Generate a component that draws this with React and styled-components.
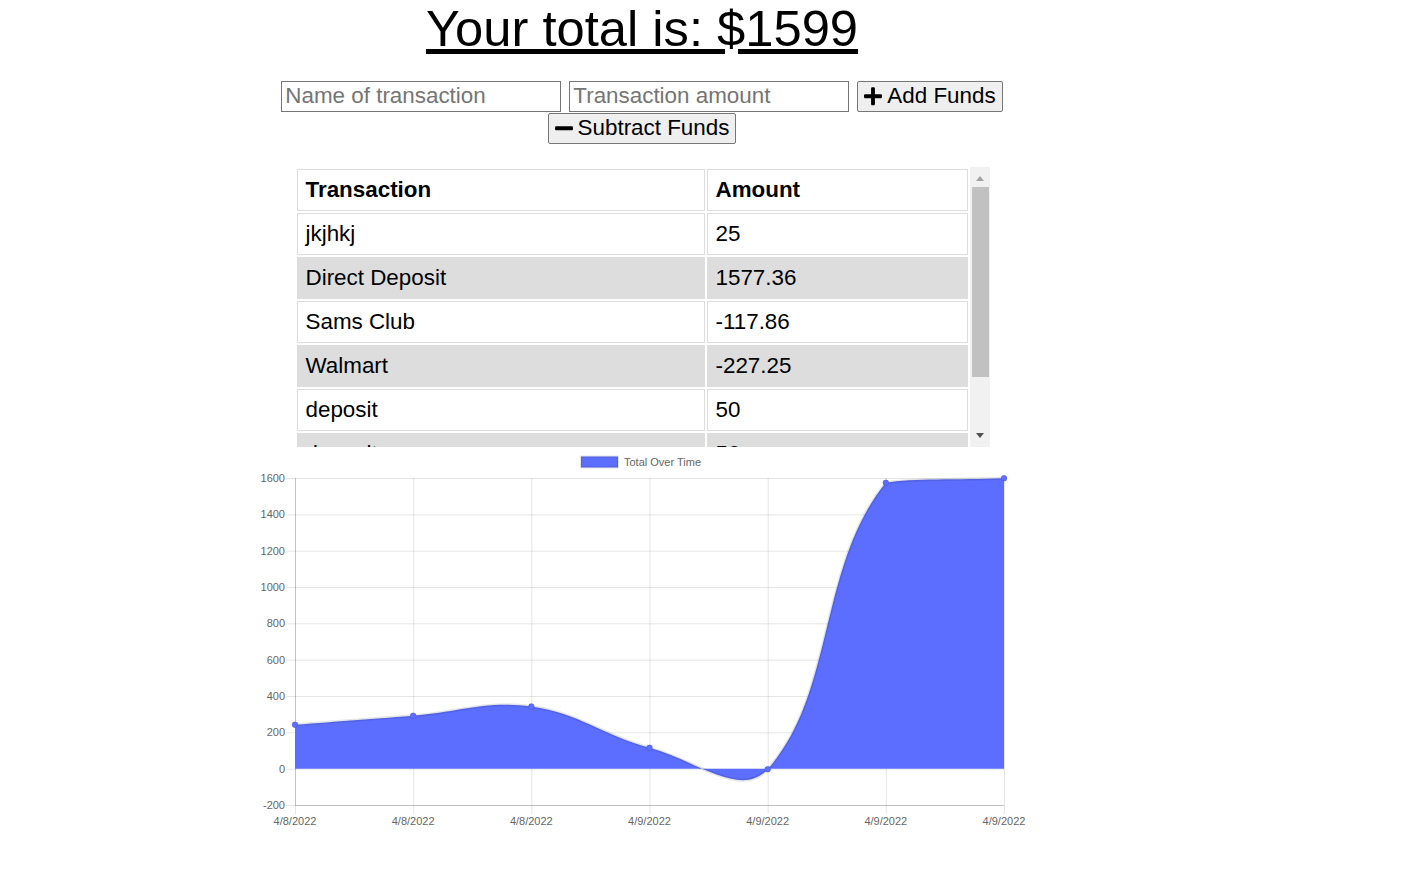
import React from 'react';
import styled, { createGlobalStyle } from 'styled-components';
import { FaPlus, FaMinus } from 'react-icons/fa';

const GlobalStyle = createGlobalStyle`
  body {
    margin: 0;
    background: #fff;
    font-family: 'Liberation Sans', Arial, sans-serif;
    color: #000;
  }
`;

const Page = styled.div`
  width: 1284px;
  display: flex;
  flex-direction: column;
  align-items: center;
`;

const Title = styled.h1`
  margin: 0;
  font-size: 50.7px;
  font-weight: 400;
  line-height: 57.5px;
  text-decoration: underline;
`;

const Form = styled.form`
  margin-top: 23px;
  width: 740px;
  display: flex;
  flex-wrap: wrap;
  justify-content: center;
  column-gap: 8px;
  row-gap: 1px;
`;

const TextInput = styled.input`
  width: 280px;
  height: 31px;
  box-sizing: border-box;
  padding: 0 3px;
  border: 1px solid #767676;
  font-family: 'Liberation Sans', Arial, sans-serif;
  font-size: 22.4px;
  color: #000;

  &::placeholder {
    color: #757575;
  }
`;

const FundsButton = styled.button`
  height: 31px;
  box-sizing: border-box;
  display: inline-flex;
  align-items: center;
  gap: 5px;
  padding: 0 6px;
  background: #efefef;
  border: 1px solid #767676;
  border-radius: 2px;
  font-family: 'Liberation Sans', Arial, sans-serif;
  font-size: 22.4px;
  color: #000;

  svg {
    width: 18px;
    height: 20.5px;
  }
`;

const ScrollFrame = styled.div`
  margin-top: 23px;
  display: flex;
  height: 280px;
`;

const TableViewport = styled.div`
  width: 675px;
  height: 100%;
  overflow: hidden;
`;

const ScrollTrack = styled.div`
  width: 20px;
  display: flex;
  flex-direction: column;
  background: #f1f1f1;
`;

const ArrowButton = styled.div`
  height: 17px;
  display: flex;
  justify-content: center;
  align-items: flex-start;
  padding-top: ${(p) => (p.$down ? '3px' : '9px')};
  box-sizing: border-box;

  &::after {
    content: '';
    border-left: 4.5px solid transparent;
    border-right: 4.5px solid transparent;
    ${(p) =>
      p.$down
        ? 'border-top: 5px solid #505050;'
        : 'border-bottom: 5px solid #a3a3a3;'}
  }
`;

const ThumbArea = styled.div`
  flex: 1;
  padding: 3px 1px 0 2px;
`;

const Thumb = styled.div`
  height: 190px;
  background: #c1c1c1;
`;

const Table = styled.table`
  width: 675px;
  border-collapse: separate;
  border-spacing: 2px;
  font-size: 22.4px;
`;

const HeadCell = styled.th`
  padding: 7px 8px;
  border: 1px solid #ddd;
  text-align: left;
  font-weight: 700;
  width: ${(p) => p.$width || 'auto'};
`;

const Row = styled.tr`
  background: ${(p) => (p.$shaded ? '#dddddd' : '#fff')};
`;

const Cell = styled.td`
  padding: 7px 8px;
  border: 1px solid #ddd;
`;

const ChartWrap = styled.div`
  width: 784px;
  height: 392px;
`;

const ChartSvg = styled.svg`
  display: block;
  font-family: 'Liberation Sans', Arial, sans-serif;
  font-size: 11px;
`;

const transactions = [
  { name: 'jkjhkj', value: '25' },
  { name: 'Direct Deposit', value: '1577.36' },
  { name: 'Sams Club', value: '-117.86' },
  { name: 'Walmart', value: '-227.25' },
  { name: 'deposit', value: '50' },
  { name: 'deposit', value: '50' },
  { name: 'paycheck', value: '241.75' },
];

const totals = [241.75, 291.75, 341.75, 114.5, -3.36, 1574, 1599];
const labels = ['4/8/2022', '4/8/2022', '4/8/2022', '4/9/2022', '4/9/2022', '4/9/2022', '4/9/2022'];

const area = { left: 45, right: 754, top: 31, bottom: 358 };
const yFor = (v) => area.top + ((1600 - v) * (area.bottom - area.top)) / 1800;
const xFor = (i) => area.left + (i * (area.right - area.left)) / 6;
const zeroY = yFor(0);
const blue = '#5b6eff';

// same spline as chart.js line tension
function splinePath(pts, t) {
  const clamp = (p) => ({
    x: Math.min(Math.max(p.x, area.left), area.right),
    y: Math.min(Math.max(p.y, area.top), area.bottom),
  });
  const ctrl = pts.map((cur, i) => {
    const prev = pts[i - 1] || cur;
    const next = pts[i + 1] || cur;
    const d01 = Math.hypot(cur.x - prev.x, cur.y - prev.y);
    const d12 = Math.hypot(next.x - cur.x, next.y - cur.y);
    const s01 = d01 / (d01 + d12) || 0;
    const s12 = d12 / (d01 + d12) || 0;
    const fa = t * s01;
    const fb = t * s12;
    return {
      prev: clamp({ x: cur.x - fa * (next.x - prev.x), y: cur.y - fa * (next.y - prev.y) }),
      next: clamp({ x: cur.x + fb * (next.x - prev.x), y: cur.y + fb * (next.y - prev.y) }),
    };
  });
  let d = `M${pts[0].x},${pts[0].y}`;
  for (let i = 1; i < pts.length; i++) {
    const a = ctrl[i - 1].next;
    const b = ctrl[i].prev;
    d += ` C${a.x},${a.y} ${b.x},${b.y} ${pts[i].x},${pts[i].y}`;
  }
  return d;
}

function TotalChart() {
  const pts = totals.map((v, i) => ({ x: xFor(i), y: yFor(v) }));
  const line = splinePath(pts, 0.4);
  const fill = `${line} L${area.right},${zeroY} L${area.left},${zeroY} Z`;
  const ticks = [1600, 1400, 1200, 1000, 800, 600, 400, 200, 0, -200];

  return (
    <ChartSvg width="784" height="392" viewBox="0 0 784 392">
      {/* legend */}
      <rect x="331" y="9.5" width="37" height="11" fill={blue} stroke="rgba(0,0,0,0.1)" strokeWidth="2" />
      <text x="374" y="19" fill="#666">Total Over Time</text>

      {/* grid */}
      {ticks.map((v) => (
        <g key={v}>
          <line x1="36" x2={area.right} y1={yFor(v) + 0.5} y2={yFor(v) + 0.5} stroke="rgba(0,0,0,0.1)" />
          <text x="35" y={yFor(v) + 4} textAnchor="end" fill="#666">{v}</text>
        </g>
      ))}
      {labels.map((l, i) => (
        <g key={i}>
          <line x1={xFor(i) + 0.5} x2={xFor(i) + 0.5} y1={area.top} y2={area.bottom + 9} stroke="rgba(0,0,0,0.1)" />
          <text x={xFor(i)} y="378" textAnchor="middle" fill="#666">{l}</text>
        </g>
      ))}
      <line x1={area.left + 0.5} x2={area.left + 0.5} y1={area.top} y2={area.bottom} stroke="rgba(0,0,0,0.15)" />
      <line x1={area.left} x2={area.right} y1={area.bottom + 0.5} y2={area.bottom + 0.5} stroke="rgba(0,0,0,0.15)" />

      {/* dataset */}
      <path d={fill} fill={blue} />
      <path d={line} fill="none" stroke="rgba(0,0,0,0.1)" strokeWidth="3" />
      {pts.map((p, i) => (
        <circle key={i} cx={p.x} cy={p.y} r="3" fill={blue} stroke="rgba(0,0,0,0.1)" />
      ))}
    </ChartSvg>
  );
}

export default function App() {
  return (
    <Page>
      <GlobalStyle />
      <Title>Your total is: $1599</Title>

      <Form onSubmit={(e) => e.preventDefault()}>
        <TextInput type="text" placeholder="Name of transaction" />
        <TextInput type="number" placeholder="Transaction amount" />
        <FundsButton type="button">
          <FaPlus />
          Add Funds
        </FundsButton>
        <FundsButton type="button">
          <FaMinus />
          Subtract Funds
        </FundsButton>
      </Form>

      <ScrollFrame>
        <TableViewport>
          <Table>
            <thead>
              <tr>
                <HeadCell $width="390px">Transaction</HeadCell>
                <HeadCell>Amount</HeadCell>
              </tr>
            </thead>
            <tbody>
              {transactions.map((t, i) => (
                <Row key={i} $shaded={i % 2 === 1}>
                  <Cell>{t.name}</Cell>
                  <Cell>{t.value}</Cell>
                </Row>
              ))}
            </tbody>
          </Table>
        </TableViewport>
        <ScrollTrack>
          <ArrowButton />
          <ThumbArea>
            <Thumb />
          </ThumbArea>
          <ArrowButton $down />
        </ScrollTrack>
      </ScrollFrame>

      <ChartWrap>
        <TotalChart />
      </ChartWrap>
    </Page>
  );
}
